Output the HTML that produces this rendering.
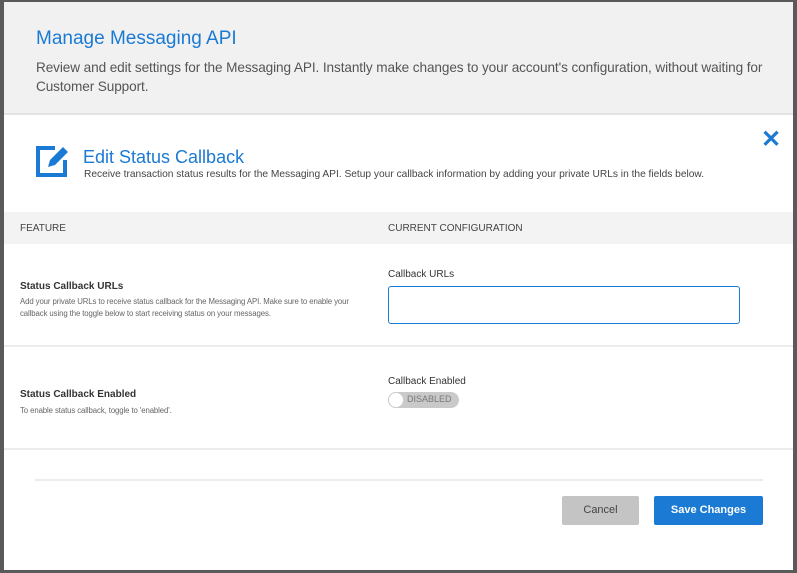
<!DOCTYPE html>
<html><head><style>
*{margin:0;padding:0;box-sizing:border-box}
body{width:797px;height:573px;background:#5a5a5a;font-family:"Liberation Sans",sans-serif;position:relative;overflow:hidden}
.w{position:absolute;left:4px;top:2px;width:789px;height:568px;background:#fff}
.hd{position:absolute;left:0;top:0;width:789px;height:113px;background:#f1f1f1;border-bottom:2px solid #e4e4e4}
.t{position:absolute;color:#1a7ad4}
.g{position:absolute;color:#444}
.s{position:absolute;color:#666;font-size:7.8px;line-height:12px;letter-spacing:-0.1px}
.th{position:absolute;left:0;top:210px;width:789px;height:32px;background:#f3f3f3}
.ln{position:absolute;height:2px;background:#ececec}
</style></head><body>
<div class="w">
<div class="hd">
<div class="t" style="left:32px;top:26px;font-size:19px">Manage Messaging API</div>
<div class="g" style="left:32px;top:56px;font-size:13.6px;line-height:19px;width:750px;color:#555;letter-spacing:-0.1px">Review and edit settings for the Messaging API. Instantly make changes to your account's configuration, without waiting for Customer Support.</div>
</div>
<svg style="position:absolute;left:31px;top:142px" width="36" height="34" viewBox="0 0 36 34"><path d="M20 4H3v27h27V16" fill="none" stroke="#1a7ad4" stroke-width="4"/><path d="M13 23l2-7L28 3l5 5-13 13z" fill="#1a7ad4"/></svg>
<div class="t" style="left:79px;top:145px;font-size:18px">Edit Status Callback</div>
<div class="g" style="left:80px;top:167px;font-size:10.2px">Receive transaction status results for the Messaging API. Setup your callback information by adding your private URLs in the fields below.</div>
<div class="t" style="left:757px;top:123px;font-size:24px;font-weight:bold">✕</div>
<div class="th"><div class="g" style="left:16px;top:11px;font-size:10px">FEATURE</div><div class="g" style="left:384px;top:11px;font-size:10px">CURRENT CONFIGURATION</div></div>
<div class="g" style="left:16px;top:279px;font-size:10px;font-weight:bold;color:#333">Status Callback URLs</div>
<div class="s" style="left:16px;top:294px;width:345px">Add your private URLs to receive status callback for the Messaging API. Make sure to enable your callback using the toggle below to start receiving status on your messages.</div>
<div class="g" style="left:384px;top:267px;font-size:10px;color:#333">Callback URLs</div>
<div style="position:absolute;left:384px;top:284px;width:352px;height:38px;border:1px solid #1a7ad4;border-radius:3px"></div>
<div class="ln" style="left:0;top:343px;width:789px"></div>
<div class="g" style="left:16px;top:387px;font-size:10px;font-weight:bold;color:#333">Status Callback Enabled</div>
<div class="s" style="left:16px;top:403px">To enable status callback, toggle to 'enabled'.</div>
<div class="g" style="left:384px;top:374px;font-size:10px;color:#333">Callback Enabled</div>
<div style="position:absolute;left:384px;top:390px;width:71px;height:16px;background:#c9c9c9;border-radius:8px"><div style="position:absolute;left:0;top:0;width:16px;height:16px;border-radius:50%;background:#fff;border:1px solid #ccc"></div><div style="position:absolute;left:19px;top:2px;font-size:9px;color:#777">DISABLED</div></div>
<div class="ln" style="left:0;top:446px;width:789px"></div>
<div class="ln" style="left:31px;top:477px;width:728px"></div>
<div style="position:absolute;left:558px;top:494px;width:77px;height:29px;background:#c4c4c4;border-radius:2px;color:#444;font-size:11px;text-align:center;line-height:29px">Cancel</div>
<div style="position:absolute;left:650px;top:494px;width:109px;height:29px;background:#1a7ad4;border-radius:2px;color:#fff;font-size:11px;font-weight:bold;text-align:center;line-height:29px">Save Changes</div>
</div>
</body></html>
